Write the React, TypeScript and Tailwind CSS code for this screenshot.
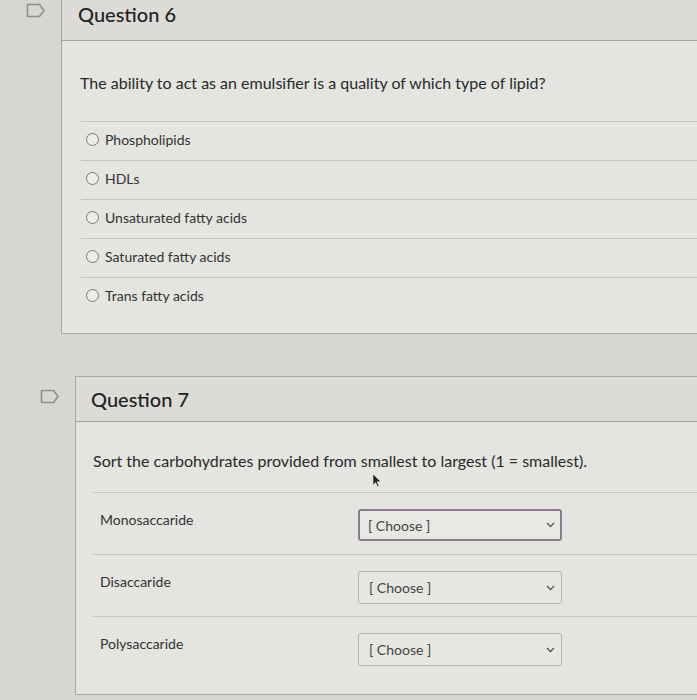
import React from "react";

const Flag = () => (
  <svg width="20" height="15" viewBox="0 0 20 15" fill="none">
    <path
      d="M1.5 1.5 H13.5 L18 7.5 L13.5 13.5 H1.5 Z"
      stroke="#8e8e8b"
      strokeWidth="1.6"
      strokeLinejoin="round"
    />
  </svg>
);

const Chevron = () => (
  <svg width="9" height="6" viewBox="0 0 9 6" fill="none">
    <path d="M1 1 L4.5 4.5 L8 1" stroke="#555" strokeWidth="1.3" />
  </svg>
);

const options = [
  "Phospholipids",
  "HDLs",
  "Unsaturated fatty acids",
  "Saturated fatty acids",
  "Trans fatty acids",
];

const sorts = [
  { label: "Monosaccaride", focused: true },
  { label: "Disaccaride", focused: false },
  { label: "Polysaccaride", focused: false },
];

export default function App() {
  return (
    <div
      className="relative w-[697px] h-[700px] overflow-hidden bg-[#d6d6d2] text-[#2d2d2d]"
      style={{ fontFamily: "Lato, 'Open Sans', sans-serif" }}
    >
      {/* Question 6 */}
      <div className="flex">
        <div className="w-[61px] flex justify-center pt-[3px] pl-[10px]">
          <Flag />
        </div>
        <div className="flex-1 border-l border-b border-[#a8a8a5]">
          <div className="h-[41px] bg-[#dcdbd7] border-b border-[#a3a3a0] pl-[16px]">
            <h2 className="text-[20px] leading-[28px] font-medium text-[#222]">
              Question 6
            </h2>
          </div>
          <div className="bg-[#e4e4e0] pl-[18px] pt-[31px] pb-[17px]">
            <p className="text-[16px] leading-[22px] text-[#2a2a2a]">
              The ability to act as an emulsifier is a quality of which type of lipid?
            </p>
            <ul className="mt-[27px] ml-[1px]">
              {options.map((o) => (
                <li
                  key={o}
                  className="h-[39px] border-t border-[#c4c4c0] flex items-center gap-[6px] pl-[5px] pb-[4px]"
                >
                  <span className="w-[13px] h-[13px] rounded-full border border-[#7a7a78] bg-[#ececea]" />
                  <span className="text-[14px] text-[#333]">{o}</span>
                </li>
              ))}
            </ul>
          </div>
        </div>
      </div>

      {/* Question 7 */}
      <div className="flex mt-[42px]">
        <div className="w-[75px] flex justify-center pt-[13px] pl-[24px]">
          <Flag />
        </div>
        <div className="flex-1 border-l border-t border-b border-[#a8a8a5]">
          <div className="h-[45px] bg-[#dcdbd7] border-b border-[#a3a3a0] pl-[15px] flex items-center">
            <h2 className="text-[20px] leading-[28px] font-medium text-[#222]">
              Question 7
            </h2>
          </div>
          <div className="bg-[#e4e4e0] pl-[17px] pt-[28px] pb-[16px]">
            <p className="text-[16px] leading-[22px] text-[#2a2a2a]">
              Sort the carbohydrates provided from smallest to largest (1 = smallest).
            </p>
            <ul className="mt-[20px]">
              {sorts.map((s) => (
                <li
                  key={s.label}
                  className="h-[62px] border-t border-[#c4c4c0] flex items-start pl-[7px] pt-[16px]"
                >
                  <span className="w-[258px] text-[14px] leading-[20px] text-[#333] pt-[1px]">
                    {s.label}
                  </span>
                  <div
                    className={
                      s.focused
                        ? "w-[204px] h-[32px] rounded-[3px] border-2 border-[#8b7b8c] bg-[#e8e8e4] flex items-center justify-between pl-[8px] pr-[5px]"
                        : "w-[204px] h-[33px] rounded-[3px] border border-[#b3b3b0] bg-[#e6e6e2] flex items-center justify-between pl-[10px] pr-[6px]"
                    }
                  >
                    <span className="text-[14px] text-[#444]">[ Choose ]</span>
                    <Chevron />
                  </div>
                </li>
              ))}
            </ul>
          </div>
        </div>
      </div>

      {/* mouse pointer */}
      <svg
        className="absolute left-[372px] top-[473px]"
        width="10"
        height="14"
        viewBox="0 0 10 14"
      >
        <path d="M1 1 L1 12 L3.5 9.5 L5.5 13.5 L7 12.8 L5 8.8 L8.8 8.8 Z" fill="#222" stroke="#e4e4e0" strokeWidth="0.6" />
      </svg>
    </div>
  );
}
